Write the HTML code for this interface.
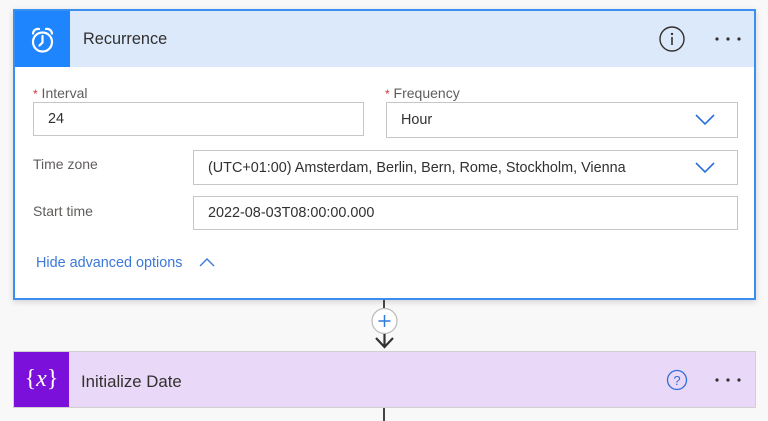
<!DOCTYPE html>
<html><head><meta charset="utf-8">
<style>
*{box-sizing:border-box;margin:0;padding:0}
svg{display:block}
body{width:768px;height:421px;background:#f8f8f8;font-family:"Liberation Sans",sans-serif;position:relative;overflow:hidden;color:#323130}
.abs{position:absolute}
.card{left:13px;top:9px;width:743px;height:291px;border:2px solid #3a8ff0;background:#fff;box-shadow:0 2px 6px rgba(0,0,0,.15)}
.hdr{left:0;top:0;width:739px;height:56px;background:#dbe9fb}
.ico{left:0;top:0;width:55px;height:56px;background:#1f85ff}
.lbl{font-size:14px;color:#605e5c}
.req{color:#d13438;font-size:12px}
.inp{border:1px solid #c8c6c4;background:#fff;font-size:14.4px;color:#323130;padding-left:14px;display:flex;align-items:center}
.chev{position:absolute;right:22px;top:50%;margin-top:-6px}
</style></head><body>
<div class="abs card">
  <div class="abs hdr">
    <div class="abs ico">
      <svg width="55" height="56" viewBox="0 0 55 56"><g fill="none" stroke="#fff" stroke-width="2.2" stroke-linecap="round"><circle cx="27.5" cy="31" r="9.5"/><path d="M27.5 25v6.5l-3 3"/><path d="M18 22.5a5 5 0 0 1 6-4.5"/><path d="M37 22.5a5 5 0 0 0-6-4.5"/></g></svg>
    </div>
    <div class="abs" style="left:68px;top:19px;font-size:16.3px;color:#323130">Recurrence</div>
    <svg class="abs" style="left:643px;top:14px" width="28" height="28"><circle cx="14" cy="14" r="12" fill="none" stroke="#323130" stroke-width="1.4"/><circle cx="14" cy="9" r="1.2" fill="#323130"/><path d="M14 12v8" stroke="#323130" stroke-width="1.6"/></svg>
    <svg class="abs" style="left:699px;top:26px" width="30" height="4"><circle cx="3" cy="2" r="1.6" fill="#323130"/><circle cx="14" cy="2" r="1.6" fill="#323130"/><circle cx="25" cy="2" r="1.6" fill="#323130"/></svg>
  </div>
  <div class="abs lbl" style="left:18px;top:74px"><span class="req">*</span> Interval</div>
  <div class="abs inp" style="left:18px;top:91px;width:331px;height:34px">24</div>
  <div class="abs lbl" style="left:370px;top:74px"><span class="req">*</span> Frequency</div>
  <div class="abs inp" style="left:371px;top:91px;width:352px;height:36px">Hour
    <svg class="chev" width="20" height="12"><path d="M1 1l9 9 9-9" fill="none" stroke="#2f6fd9" stroke-width="1.6"/></svg></div>
  <div class="abs lbl" style="left:18px;top:145px">Time zone</div>
  <div class="abs inp" style="left:178px;top:139px;width:545px;height:35px">(UTC+01:00) Amsterdam, Berlin, Bern, Rome, Stockholm, Vienna
    <svg class="chev" width="20" height="12"><path d="M1 1l9 9 9-9" fill="none" stroke="#2f6fd9" stroke-width="1.6"/></svg></div>
  <div class="abs lbl" style="left:18px;top:192px">Start time</div>
  <div class="abs inp" style="left:178px;top:185px;width:545px;height:34px">2022-08-03T08:00:00.000</div>
  <div class="abs" style="left:21px;top:244px;font-size:14.4px;color:#3b78d8">Hide advanced options</div>
  <svg class="abs" style="left:184px;top:246px" width="16" height="10"><path d="M1 9l7-7 7 7" fill="none" stroke="#3b78d8" stroke-width="1.4"/></svg>
</div>
<div class="abs" style="left:383px;top:300px;width:2px;height:9px;background:#444"></div>
<svg class="abs" style="left:370px;top:307px" width="30" height="44"><circle cx="14.5" cy="14" r="12.5" fill="#fff" stroke="#bbb" stroke-width="1.2"/><path d="M14.5 8v12M8.5 14h12" stroke="#2f7ad9" stroke-width="1.5"/><path d="M14.5 27v13M6 31l8.5 9 8.5-9" fill="none" stroke="#333" stroke-width="2.2"/></svg>
<div class="abs" style="left:13px;top:351px;width:743px;height:57px;border:1px solid #d0d0d0;background:#e9d8f7">
  <div class="abs" style="left:0;top:0;width:55px;height:55px;background:#7a10d9;color:#fff;font-family:'Liberation Serif',serif;font-size:24px;display:flex;align-items:center;justify-content:center">{<i>x</i>}</div>
  <div class="abs" style="left:67px;top:20px;font-size:16.8px;color:#323130">Initialize Date</div>
  <svg class="abs" style="left:652px;top:17px" width="22" height="22"><circle cx="11" cy="11" r="9.5" fill="none" stroke="#2f6fd9" stroke-width="1.3"/><text x="11" y="16" text-anchor="middle" font-size="13" fill="#2f6fd9" font-family="Liberation Sans">?</text></svg>
  <svg class="abs" style="left:700px;top:26px" width="30" height="4"><circle cx="3" cy="2" r="1.6" fill="#323130"/><circle cx="14" cy="2" r="1.6" fill="#323130"/><circle cx="25" cy="2" r="1.6" fill="#323130"/></svg>
</div>
<div class="abs" style="left:383px;top:408px;width:2px;height:13px;background:#444"></div>
</body></html>
